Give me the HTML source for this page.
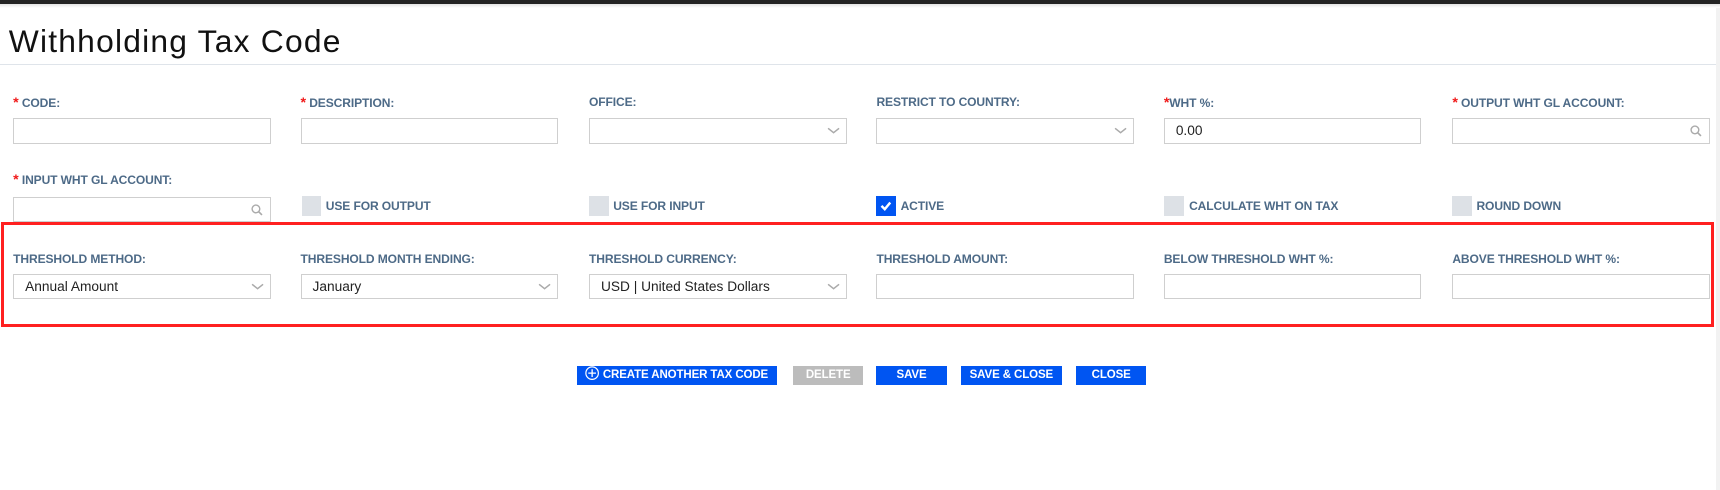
<!DOCTYPE html>
<html><head><style>
html,body{margin:0;padding:0;background:#fff;width:1720px;height:490px;overflow:hidden}
#w{zoom:1.09694;position:relative;width:1568px;height:447px;font-family:"Liberation Sans",sans-serif}
.top{position:absolute;left:0;top:0;width:1568px;height:4px;background:#242424}
.sh{position:absolute;left:0;top:4px;width:1568px;height:3px;background:linear-gradient(#e4e4e4,#fff)}
h1{position:absolute;left:8px;top:21px;margin:0;font-weight:normal;font-size:29px;color:#111;letter-spacing:1.1px}
.sep{position:absolute;left:0;top:58px;width:1568px;height:1px;background:#dfe4ea}
.lab{position:absolute;font-size:11px;font-weight:bold;color:#4d6a87;white-space:nowrap;letter-spacing:-0.1px}
.lab b{color:#f01a1a;font-size:13px}
.in{position:absolute;width:233px;height:21px;border:1px solid #cfcfcf;background:#fff;font-size:12.5px;color:#222;line-height:21px;box-sizing:content-box}
.in span{padding-left:10px}
.chev{position:absolute;right:5px;top:5px}
.mag{position:absolute;right:6px;top:5px}
.cb{position:absolute;width:18px;height:18px;background:#dde1e6}
.red{position:absolute;left:1px;top:202px;width:1556px;height:91px;border:3px solid #ff2020}
.btn{position:absolute;top:334px;height:17px;background:#0055f2;color:#fff;font-size:10.5px;font-weight:bold;line-height:17px;text-align:center;white-space:nowrap;letter-spacing:-0.1px}
.scr{position:absolute;left:1564px;top:7px;width:4px;height:440px;background:#f2f2f2}
</style></head><body><div id="w">
<div class="top"></div><div class="sh"></div>
<h1>Withholding Tax Code</h1>
<div class="sep"></div>

<div class="lab" style="left:12px;top:87px"><b>*</b> CODE:</div>
<div class="lab" style="left:274px;top:87px"><b>*</b> DESCRIPTION:</div>
<div class="lab" style="left:537px;top:87px">OFFICE:</div>
<div class="lab" style="left:799px;top:87px">RESTRICT TO COUNTRY:</div>
<div class="lab" style="left:1061px;top:87px"><b>*</b>WHT %:</div>
<div class="lab" style="left:1324px;top:87px"><b>*</b> OUTPUT WHT GL ACCOUNT:</div>

<div class="in" style="left:12px;top:108px"></div>
<div class="in" style="left:274px;top:108px"></div>
<div class="in" style="left:537px;top:108px"><svg class="chev" width="12" height="10"><path d="M1 3l5 4 5-4" stroke="#aaa" fill="none" stroke-width="1.4"/></svg></div>
<div class="in" style="left:799px;top:108px"><svg class="chev" width="12" height="10"><path d="M1 3l5 4 5-4" stroke="#aaa" fill="none" stroke-width="1.4"/></svg></div>
<div class="in" style="left:1061px;top:108px"><span>0.00</span></div>
<div class="in" style="left:1324px;top:108px"><svg class="mag" width="11" height="11"><circle cx="4.5" cy="4.5" r="3.5" stroke="#aaa" fill="none" stroke-width="1.3"/><path d="M7 7l3 3" stroke="#aaa" stroke-width="1.5"/></svg></div>

<div class="lab" style="left:12px;top:157px"><b>*</b> INPUT WHT GL ACCOUNT:</div>
<div class="in" style="left:12px;top:180px"><svg class="mag" width="11" height="11"><circle cx="4.5" cy="4.5" r="3.5" stroke="#aaa" fill="none" stroke-width="1.3"/><path d="M7 7l3 3" stroke="#aaa" stroke-width="1.5"/></svg></div>

<div class="cb" style="left:275px;top:179px"></div><div class="lab" style="left:297px;top:181px">USE FOR OUTPUT</div>
<div class="cb" style="left:537px;top:179px"></div><div class="lab" style="left:559px;top:181px">USE FOR INPUT</div>
<div class="cb" style="left:799px;top:179px;background:#0055f2"><svg width="18" height="18"><path d="M5 9l3 3 5-6" stroke="#fff" fill="none" stroke-width="2.2"/></svg></div><div class="lab" style="left:821px;top:181px">ACTIVE</div>
<div class="cb" style="left:1061px;top:179px"></div><div class="lab" style="left:1084px;top:181px">CALCULATE WHT ON TAX</div>
<div class="cb" style="left:1324px;top:179px"></div><div class="lab" style="left:1346px;top:181px">ROUND DOWN</div>

<div class="red"></div>
<div class="lab" style="left:12px;top:230px">THRESHOLD METHOD:</div>
<div class="lab" style="left:274px;top:230px">THRESHOLD MONTH ENDING:</div>
<div class="lab" style="left:537px;top:230px">THRESHOLD CURRENCY:</div>
<div class="lab" style="left:799px;top:230px">THRESHOLD AMOUNT:</div>
<div class="lab" style="left:1061px;top:230px">BELOW THRESHOLD WHT %:</div>
<div class="lab" style="left:1324px;top:230px">ABOVE THRESHOLD WHT %:</div>

<div class="in" style="left:12px;top:250px"><span>Annual Amount</span><svg class="chev" width="12" height="10"><path d="M1 3l5 4 5-4" stroke="#aaa" fill="none" stroke-width="1.4"/></svg></div>
<div class="in" style="left:274px;top:250px"><span>January</span><svg class="chev" width="12" height="10"><path d="M1 3l5 4 5-4" stroke="#aaa" fill="none" stroke-width="1.4"/></svg></div>
<div class="in" style="left:537px;top:250px"><span>USD | United States Dollars</span><svg class="chev" width="12" height="10"><path d="M1 3l5 4 5-4" stroke="#aaa" fill="none" stroke-width="1.4"/></svg></div>
<div class="in" style="left:799px;top:250px"></div>
<div class="in" style="left:1061px;top:250px"></div>
<div class="in" style="left:1324px;top:250px"></div>

<div class="btn" style="left:526px;width:182px"><svg width="13" height="13" style="vertical-align:-2px"><circle cx="6.5" cy="6.5" r="5.7" stroke="#fff" fill="none" stroke-width="1.1"/><path d="M6.5 3v7M3 6.5h7" stroke="#fff" stroke-width="1.2"/></svg> CREATE ANOTHER TAX CODE</div>
<div class="btn" style="left:723px;width:64px;background:#bcbcbc">DELETE</div>
<div class="btn" style="left:799px;width:64px">SAVE</div>
<div class="btn" style="left:876px;width:92px">SAVE &amp; CLOSE</div>
<div class="btn" style="left:981px;width:64px">CLOSE</div>
<div class="scr"></div>
</div></body></html>
